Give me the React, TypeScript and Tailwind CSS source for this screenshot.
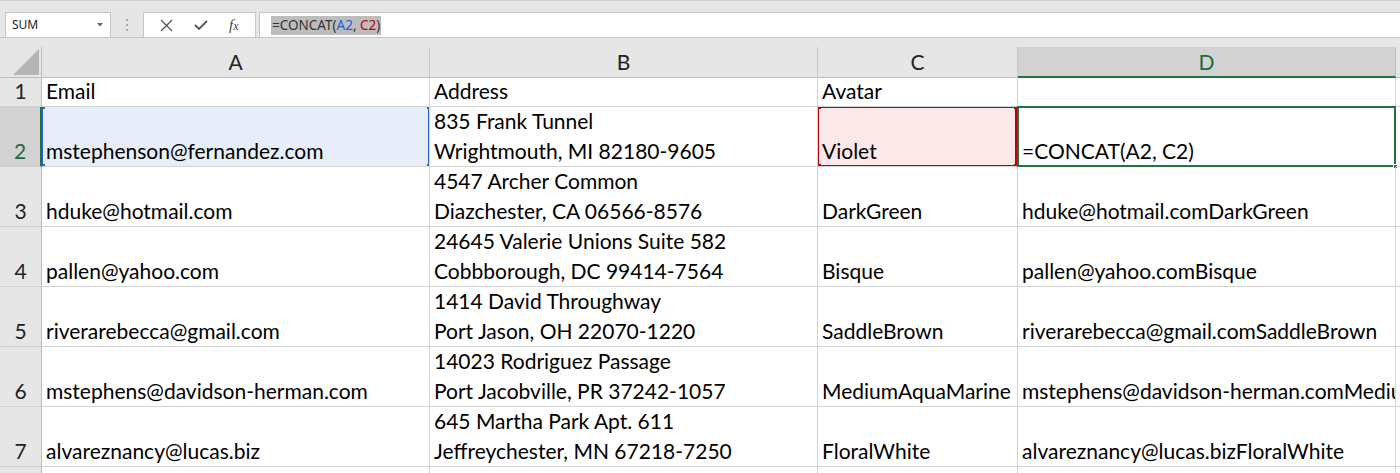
import React from "react";

const rows = [
  {
    n: 3,
    email: "hduke@hotmail.com",
    addr: ["4547 Archer Common", "Diazchester, CA 06566-8576"],
    avatar: "DarkGreen",
  },
  {
    n: 4,
    email: "pallen@yahoo.com",
    addr: ["24645 Valerie Unions Suite 582", "Cobbborough, DC 99414-7564"],
    avatar: "Bisque",
  },
  {
    n: 5,
    email: "riverarebecca@gmail.com",
    addr: ["1414 David Throughway", "Port Jason, OH 22070-1220"],
    avatar: "SaddleBrown",
  },
  {
    n: 6,
    email: "mstephens@davidson-herman.com",
    addr: ["14023 Rodriguez Passage", "Port Jacobville, PR 37242-1057"],
    avatar: "MediumAquaMarine",
  },
  {
    n: 7,
    email: "alvareznancy@lucas.biz",
    addr: ["645 Martha Park Apt. 611", "Jeffreychester, MN 67218-7250"],
    avatar: "FloralWhite",
  },
];

const cell =
  "relative flex flex-col justify-end shrink-0 border-r border-b border-[#d4d4d4] px-[4px] overflow-hidden whitespace-nowrap leading-[30px]";

function Handle({ cls }: { cls: string }) {
  return <div className={`absolute w-[5px] h-[5px] ${cls}`} />;
}

function FormulaBar() {
  return (
    <div className="h-[47px] bg-[#e6e6e6] border-t border-[#d0d0d0] relative">
      <div className="absolute left-0 right-0 top-[11px] h-[26px] flex items-stretch border-b border-[#c6c6c6]">
        <div className="ml-[5px] w-[106px] bg-white border border-[#c6c6c6] border-b-0 flex items-center justify-between pl-[6px] pr-[7px]">
          <span className="text-[12px] text-[#222] font-['Noto_Sans',sans-serif]">SUM</span>
          <svg width="6" height="4" viewBox="0 0 6 4">
            <path d="M0 0 L6 0 L3 3.5 Z" fill="#666" />
          </svg>
        </div>
        <div className="w-[32px] flex flex-col items-center justify-center gap-[3px]">
          <div className="w-[2px] h-[2px] bg-[#a8a8a8]" />
          <div className="w-[2px] h-[2px] bg-[#a8a8a8]" />
          <div className="w-[2px] h-[2px] bg-[#a8a8a8]" />
        </div>
        <div className="w-[113px] bg-white border border-[#c6c6c6] border-b-0 flex items-center justify-around px-[6px]">
          <svg width="13" height="13" viewBox="0 0 13 13">
            <path d="M1 1 L12 12 M12 1 L1 12" stroke="#555" strokeWidth="1.3" />
          </svg>
          <svg width="14" height="12" viewBox="0 0 14 12">
            <path d="M1 6 L5 10 L13 2" stroke="#555" strokeWidth="1.8" fill="none" />
          </svg>
          <span className="text-[15px] italic text-[#444] font-['Liberation_Serif',serif] leading-none">
            f<span className="text-[12px]">x</span>
          </span>
        </div>
        <div className="ml-[3px] flex-1 bg-white border-l border-t border-[#c6c6c6] flex items-center pl-[11px]">
          <span className="bg-[#bdbdbd] h-[19px] flex items-center px-[1px] text-[13.5px] text-[#333] font-['Noto_Sans',sans-serif]">
            =CONCAT(<span className="text-[#1f5fcf]">A2</span>,&nbsp;<span className="text-[#c00000]">C2</span>)
          </span>
        </div>
      </div>
    </div>
  );
}

function ColHeader({ label, w, active }: { label: string; w: string; active?: boolean }) {
  return (
    <div
      className={`${w} shrink-0 h-full flex items-center justify-center border-r ${
        active
          ? "bg-[#d2d2d2] text-[#1e6b3a] border-b-2 border-b-[#217346] border-r-[#bdbdbd]"
          : "border-b border-b-[#bdbdbd] border-r-[#c8c8c8] text-[#222]"
      }`}
    >
      {label}
    </div>
  );
}

function RowHeader({ n, h, active }: { n?: number; h: string; active?: boolean }) {
  return (
    <div
      className={`w-[42px] ${h} shrink-0 flex items-end justify-center leading-[30px] border-b border-[#d0d0d0] border-r ${
        active ? "bg-[#d2d2d2] text-[#1e6b3a] border-r-2 border-r-[#217346]" : "bg-[#e6e6e6] text-[#222] border-r-[#bdbdbd]"
      }`}
    >
      {n}
    </div>
  );
}

export default function App() {
  return (
    <div className="w-[1400px] h-[473px] overflow-hidden bg-white font-['Lato',sans-serif] text-[21px] text-black">
      <FormulaBar />
      {/* column headers */}
      <div className="h-[31px] flex bg-[#e6e6e6]">
        <div className="w-[42px] shrink-0 h-full border-r border-b border-[#bdbdbd] flex items-end justify-end pr-[2px] pb-[2px]">
          <svg width="26" height="26" viewBox="0 0 26 26">
            <path d="M26 0 L26 26 L0 26 Z" fill="#b4b4b4" />
          </svg>
        </div>
        <ColHeader label="A" w="w-[388px]" />
        <ColHeader label="B" w="w-[388px]" />
        <ColHeader label="C" w="w-[200px]" />
        <ColHeader label="D" w="w-[378px]" active />
        <div className="flex-1 h-full border-b border-[#bdbdbd]" />
      </div>
      {/* row 1 */}
      <div className="h-[29px] flex">
        <RowHeader n={1} h="h-[29px]" />
        <div className={`${cell} w-[388px]`}>Email</div>
        <div className={`${cell} w-[388px]`}>Address</div>
        <div className={`${cell} w-[200px]`}>Avatar</div>
        <div className={`${cell} w-[378px]`}></div>
        <div className={`${cell} flex-1 border-r-0`}>Avatar Email</div>
      </div>
      {/* row 2 */}
      <div className="h-[60px] flex">
        <RowHeader n={2} h="h-[60px]" active />
        <div className={`${cell} w-[388px] bg-[#e8eef9]`}>
          <div className="absolute inset-x-0 top-[-1px] bottom-[-1px] border border-[#2a62c9]" />
          <Handle cls="bg-[#2a62c9] left-[-2px] top-[-3px]" />
          <Handle cls="bg-[#2a62c9] right-[-3px] top-[-3px]" />
          <Handle cls="bg-[#2a62c9] left-[-2px] bottom-[-3px]" />
          <Handle cls="bg-[#2a62c9] right-[-3px] bottom-[-3px]" />
          mstephenson@fernandez.com
        </div>
        <div className={`${cell} w-[388px]`}>
          <span>835 Frank Tunnel</span>
          <span>Wrightmouth, MI 82180-9605</span>
        </div>
        <div className={`${cell} w-[200px] bg-[#fbe9e9]`}>
          <div className="absolute left-[-1px] right-0 top-[-1px] bottom-[-1px] border-2 border-[#c00000]" />
          <Handle cls="bg-[#c00000] left-[-2px] top-[-3px]" />
          <Handle cls="bg-[#c00000] right-[-2px] top-[-3px]" />
          <Handle cls="bg-[#c00000] left-[-2px] bottom-[-3px]" />
          <Handle cls="bg-[#c00000] right-[-2px] bottom-[-3px]" />
          Violet
        </div>
        <div className={`${cell} w-[378px] overflow-visible`}>
          <div className="absolute left-[-1px] right-[-1px] top-[-1px] bottom-[-1px] border-2 border-[#217346]" />
          <div className="absolute right-[-3px] bottom-[-3px] w-[5px] h-[5px] bg-[#217346] border border-white" />
          =CONCAT(A2, C2)
        </div>
        <div className={`${cell} flex-1 border-r-0`}></div>
      </div>
      {rows.map((r) => (
        <div key={r.n} className="h-[60px] flex">
          <RowHeader n={r.n} h="h-[60px]" />
          <div className={`${cell} w-[388px]`}>{r.email}</div>
          <div className={`${cell} w-[388px]`}>
            <span>{r.addr[0]}</span>
            <span>{r.addr[1]}</span>
          </div>
          <div className={`${cell} w-[200px]`}>{r.avatar}</div>
          <div className={`${cell} w-[378px]`}>{r.email + r.avatar}</div>
          <div className={`${cell} flex-1 border-r-0`}></div>
        </div>
      ))}
      <div className="h-[30px] flex">
        <RowHeader h="h-[30px]" />
        <div className={`${cell} w-[388px]`} />
        <div className={`${cell} w-[388px]`} />
        <div className={`${cell} w-[200px]`} />
        <div className={`${cell} w-[378px]`} />
        <div className={`${cell} flex-1 border-r-0`} />
      </div>
    </div>
  );
}
